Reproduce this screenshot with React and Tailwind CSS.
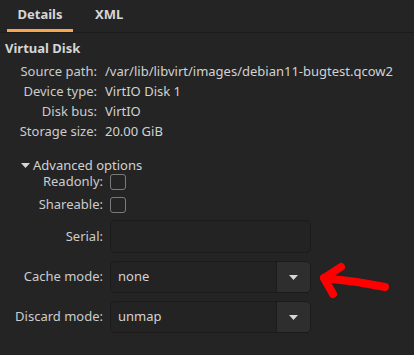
import React from 'react';

function Caret() {
  return (
    <svg width="9" height="5" viewBox="0 0 9 5" className="text-[#d6d6d6]">
      <path d="M0 0 L9 0 L4.5 5 Z" fill="currentColor" />
    </svg>
  );
}

function Combo({ value }) {
  return (
    <div className="flex h-[32px] w-[201px] rounded-[5px] border border-[#1b1b1b] bg-[#232323] overflow-hidden">
      <div className="flex-1 flex items-center pl-[7px] text-[#d4d4d4]">{value}</div>
      <div className="w-[34px] flex items-center justify-center bg-[#2e2e2e] border-l border-[#1b1b1b]">
        <Caret />
      </div>
    </div>
  );
}

function Checkbox() {
  return <div className="w-[16px] h-[16px] rounded-[3px] border-[1.5px] border-[#7a7a7a]" />;
}

function Row({ label, children, className = '' }) {
  return (
    <div className={`flex items-center gap-[7px] ${className}`}>
      <div className="w-[103px] text-right text-[#cccccc] whitespace-nowrap">{label}</div>
      {children}
    </div>
  );
}

export default function App() {
  const info = [
    ['Source path:', '/var/lib/libvirt/images/debian11-bugtest.qcow2'],
    ['Device type:', 'VirtIO Disk 1'],
    ['Disk bus:', 'VirtIO'],
    ['Storage size:', '20.00 GiB'],
  ];

  return (
    <div className="w-[414px] h-[355px] bg-[#242424] text-[#d2d2d2] text-[13px] overflow-hidden relative" style={{ fontFamily: '"Noto Sans", "Open Sans", sans-serif' }}>
      {/* Tabs */}
      <div className="flex h-[33px] border-b border-[#1c1c1c]">
        <div className="ml-[7px] w-[66px] flex flex-col">
          <div className="flex-1 flex items-center justify-center font-bold text-[#d6d6d6]">Details</div>
          <div className="h-[3px] bg-[#f8a654]" />
        </div>
        <div className="ml-[22px] flex items-center font-bold text-[#d6d6d6] pb-[3px]">XML</div>
      </div>

      {/* Virtual Disk */}
      <div className="pl-[5px] pt-[5px] font-bold text-[#d6d6d6] leading-[20px]">Virtual Disk</div>
      <div className="grid grid-cols-[97px_1fr] gap-x-[8px] mt-[3px]">
        {info.map(([label, value]) => (
          <React.Fragment key={label}>
            <div className="text-right leading-[20px] text-[#cccccc]">{label}</div>
            <div className="leading-[20px] whitespace-nowrap">{value}</div>
          </React.Fragment>
        ))}
      </div>

      {/* Advanced options */}
      <div className="flex items-center pl-[21px] mt-[15px] leading-[18px]">
        <svg width="9" height="5" viewBox="0 0 9 5" className="mr-[3px] text-[#d6d6d6]">
          <path d="M0 0 L9 0 L4.5 5 Z" fill="currentColor" />
        </svg>
        <span>Advanced options</span>
      </div>

      <div className="flex flex-col">
        <Row label="Readonly:" className="h-[16px]"><Checkbox /></Row>
        <Row label="Shareable:" className="h-[16px] mt-[7px]"><Checkbox /></Row>
        <Row label="Serial:" className="mt-[7px]">
          <div className="h-[33px] w-[201px] rounded-[5px] border border-[#1b1b1b] bg-[#232323]" />
        </Row>
        <Row label="Cache mode:" className="mt-[8px]"><Combo value="none" /></Row>
        <Row label="Discard mode:" className="mt-[8px]"><Combo value="unmap" /></Row>
      </div>

      {/* Red annotation arrow */}
      <svg className="absolute left-0 top-0 pointer-events-none" width="414" height="355" viewBox="0 0 414 355">
        <g stroke="#ff0000" strokeWidth="8" strokeLinecap="round" strokeLinejoin="round" fill="none">
          <path d="M324 278 C345 280 365 283 385 287" />
          <path d="M341 267 L324 278 L333 294" />
        </g>
      </svg>
    </div>
  );
}
